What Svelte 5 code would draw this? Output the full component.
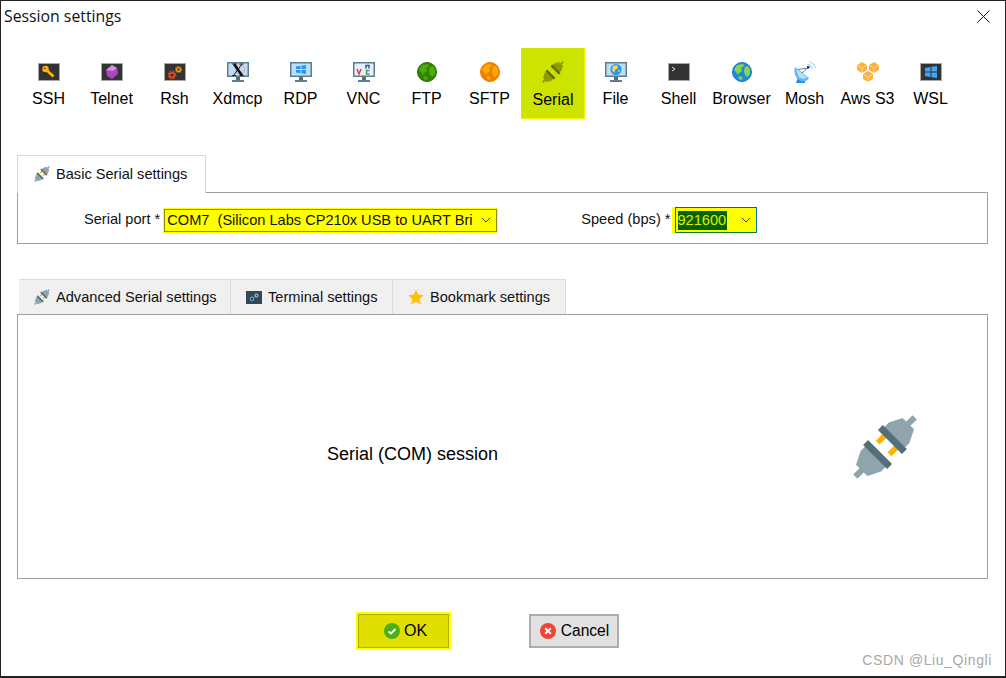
<script lang="ts">
	const sessions = [
		'SSH', 'Telnet', 'Rsh', 'Xdmcp', 'RDP', 'VNC', 'FTP', 'SFTP',
		'Serial', 'File', 'Shell', 'Browser', 'Mosh', 'Aws S3', 'WSL'
	];
	const lowerTabs = ['Advanced Serial settings', 'Terminal settings', 'Bookmark settings'];
	const land = 'M5 3 L11 2 L12 4 L9 6 L10 9 L7 11 L6 13 L4 10 L2 8 Z M13 5 L16 4 L18 8 L18 12 L15 15 L13 13 L12 9 Z M6 15 L9 14 L11 17 L8 18 Z';
</script>

{#snippet plug(size, cls)}
	<svg class="plug {cls}" width={size} height={size} viewBox="0 0 64 64">
		<g transform="rotate(-45 32 32)">
			<rect class="body" x="64" y="29" width="10" height="6" />
			<polygon class="body" points="45,17.5 52,17.5 65,24 65,40 52,46.5 45,46.5" />
			<rect class="prong" x="30" y="21" width="11" height="5.5" />
			<rect class="prong" x="30" y="37.5" width="11" height="5.5" />
			<rect class="bar" x="39" y="15" width="7" height="34" />
			<rect class="body" x="-10" y="29" width="10" height="6" />
			<polygon class="body" points="19,17.5 12,17.5 -1,24 -1,40 12,46.5 19,46.5" />
			<rect class="bar" x="18" y="15" width="7" height="34" />
		</g>
	</svg>
{/snippet}

{#snippet monitor(inner)}
	<svg width="22" height="20" viewBox="0 0 22 20">
		<rect x="0" y="0" width="22" height="15" fill="#607d8b" />
		<rect x="1.5" y="1.5" width="19" height="12" fill="#bbdefb" />
		<rect x="9" y="15" width="4" height="3" fill="#546e7a" />
		<rect x="5" y="18" width="12" height="2" fill="#607d8b" />
		{@render inner()}
	</svg>
{/snippet}

{#snippet globe(rim, sea, ground)}
	<svg width="20" height="20" viewBox="0 0 20 20">
		<circle cx="10" cy="10" r="9.5" fill={sea} stroke={rim} />
		<path d={land} fill={ground} />
	</svg>
{/snippet}

{#snippet gears(a, b)}
	<circle cx="8" cy="12" r="2.4" fill="none" stroke={a} stroke-width="1.6" />
	<circle cx="8" cy="12" r="3.8" fill="none" stroke={a} stroke-width="1.2" stroke-dasharray="1.6 1.4" />
	<circle cx="14.5" cy="6.5" r="1.9" fill="none" stroke={b} stroke-width="1.4" />
	<circle cx="14.5" cy="6.5" r="3.1" fill="none" stroke={b} stroke-width="1" stroke-dasharray="1.4 1.2" />
{/snippet}

{#snippet termBox(inner)}
	<svg width="22" height="18" viewBox="0 0 22 18">
		<rect x="0.5" y="0.5" width="21" height="17" fill="#333" stroke="#aaa" />
		{@render inner()}
	</svg>
{/snippet}

{#snippet sessionIcon(name)}
	{#if name === 'SSH'}
		{#snippet key()}
			<circle cx="7.5" cy="6" r="3.2" fill="#ffb300" />
			<path d="M8 6.5 L15.5 13.5" stroke="#ffb300" stroke-width="2.8" />
			<circle cx="6.8" cy="5.2" r="0.8" fill="#333" />
		{/snippet}
		{@render termBox(key)}
	{:else if name === 'Telnet'}
		{#snippet gem()}
			<polygon points="11,2 16,5 17,11 11,16 6,13 5,7" fill="#ab47bc" />
			<polygon points="11,2 16,5 12,8 5,7" fill="#ce93d8" />
		{/snippet}
		{@render termBox(gem)}
	{:else if name === 'Rsh'}
		{#snippet cogs()}
			{@render gears('#e64a19', '#ff9800')}
		{/snippet}
		{@render termBox(cogs)}
	{:else if name === 'Xdmcp'}
		{#snippet x()}
			<circle cx="13" cy="7.5" r="4.5" fill="none" stroke="#f4a582" stroke-width="1.2" />
			<path d="M7 2 L15 13.5" stroke="#111" stroke-width="2.6" />
			<path d="M15 2 L6.5 13.5" stroke="#111" stroke-width="1" />
			<path d="M5 2 H10 M12.5 2 H16.5 M5 13.5 H9 M12.5 13.5 H17" stroke="#111" stroke-width="0.8" />
		{/snippet}
		{@render monitor(x)}
	{:else if name === 'RDP'}
		{#snippet win()}
			<path d="M6 4.5 L10.5 3.8 V7 H6 Z M11.5 3.7 L16 3 V7 H11.5 Z M6 8 H10.5 V11.2 L6 10.5 Z M11.5 8 H16 V12 L11.5 11.3 Z" fill="#2196f3" />
		{/snippet}
		{@render monitor(win)}
	{:else if name === 'VNC'}
		<svg width="22" height="20" viewBox="0 0 22 20" aria-hidden="true">
			<rect x="0" y="0" width="22" height="15" fill="#607d8b" />
			<rect x="1.5" y="1.5" width="19" height="12" fill="#e3f2fd" />
			<rect x="9" y="15" width="4" height="3" fill="#546e7a" />
			<rect x="5" y="18" width="12" height="2" fill="#607d8b" />
			<path d="M4 7 L6 12 L8 7" fill="none" stroke="#e53935" stroke-width="1.5" />
			<path d="M13 6.5 V3.5 H16 V6.5" fill="none" stroke="#3949ab" stroke-width="1.4" />
			<path d="M16.5 8.5 H13.5 V12 H16.5" fill="none" stroke="#43a047" stroke-width="1.4" />
		</svg>
	{:else if name === 'FTP'}
		{@render globe('#2c6e00', '#2f8500', '#4cae0c')}
	{:else if name === 'SFTP'}
		{@render globe('#f08000', '#f57c00', '#ffab00')}
	{:else if name === 'Serial'}
		{@render plug(22, 'olive')}
	{:else if name === 'File'}
		{#snippet earth()}
			<circle cx="11" cy="7.5" r="5.5" fill="#2196f3" />
			<path d="M8 4 L12 3 L13 6 L10 8 L9 11 L7 8 Z M13 8 L15 8 L14 11 Z" fill="#ffd54f" />
		{/snippet}
		{@render monitor(earth)}
	{:else if name === 'Shell'}
		{#snippet prompt()}
			<path d="M4 4 L7 6 L4 8" fill="none" stroke="#ddd" stroke-width="1" />
		{/snippet}
		{@render termBox(prompt)}
	{:else if name === 'Browser'}
		{@render globe('#1976d2', '#1e88e5', '#8bd640')}
	{:else if name === 'Mosh'}
		<svg width="22" height="22" viewBox="0 0 22 22">
			<path d="M4 16 H11 L11 22 H2 Z" fill="#1e88e5" />
			<path d="M1 6 L15 17 C13 21 6 22 3 17 C0 13 0 9 1 6 Z" fill="#64b5f6" />
			<path d="M2.5 8 L13 16.5 C10 18.5 6 18 4.5 15 C3.5 13 2.5 10 2.5 8 Z" fill="#bbdefb" />
			<path d="M4 8.5 L14 7 M8 12 L14 6.5" stroke="#5f7f9f" stroke-width="1" />
			<rect x="13" y="5" width="2.5" height="2.5" fill="#1a3f80" />
			<path d="M13.5 3 A6 6 0 0 1 18.5 8 M15.5 0.5 A9 9 0 0 1 21.5 7" fill="none" stroke="#90caf9" stroke-width="1" />
		</svg>
	{:else if name === 'Aws S3'}
		<svg width="22" height="20" viewBox="0 0 22 20">
			<path d="M0 3 L5 0 L10 3 V8 L5 11 L0 8 Z M12 3 L17 0 L22 3 V8 L17 11 L12 8 Z M6 12 L11 9 L16 12 V17 L11 20 L6 17 Z" fill="#ffb03a" />
			<path d="M0 3 L5 6 L10 3 M5 6 V11 M12 3 L17 6 L22 3 M17 6 V11 M6 12 L11 15 L16 12 M11 15 V20" fill="none" stroke="#ffe0b2" stroke-width="0.8" />
		</svg>
	{:else}
		{#snippet tiles()}
			<path d="M5 5 L10.5 4 V8.5 H5 Z M11.5 3.8 L17 3 V8.5 H11.5 Z M5 9.5 H10.5 V14 L5 13 Z M11.5 9.5 H17 V15 L11.5 14.2 Z" fill="#42a5f5" />
		{/snippet}
		{@render termBox(tiles)}
	{/if}
{/snippet}

{#snippet tabIcon(label)}
	{#if label.startsWith('Advanced')}
		{@render plug(16, '')}
	{:else if label.startsWith('Terminal')}
		<svg width="16" height="13" viewBox="0 0 16 13">
			<rect width="16" height="13" fill="#37474f" />
			<circle cx="6" cy="8" r="1.8" fill="none" stroke="#42a5f5" stroke-width="1.2" />
			<circle cx="10.5" cy="4.5" r="1.5" fill="none" stroke="#90caf9" stroke-width="1.1" />
		</svg>
	{:else}
		<svg width="16" height="16" viewBox="0 0 16 16">
			<polygon points="8,0.5 10.3,5.6 15.8,6.2 11.7,9.9 12.9,15.4 8,12.6 3.1,15.4 4.3,9.9 0.2,6.2 5.7,5.6" fill="#ffc107" />
		</svg>
	{/if}
{/snippet}

{#snippet chevron()}
	<svg class="chevron" width="10" height="6" viewBox="0 0 10 6">
		<path d="M1 1 L5 5 L9 1" fill="none" stroke="#333" stroke-width="1" />
	</svg>
{/snippet}

<div class="window">
	<header class="titlebar">
		<span class="title">Session settings</span>
		<svg class="close" width="13" height="13" viewBox="0 0 13 13">
			<path d="M0.5 0.5 L12.5 12.5 M12.5 0.5 L0.5 12.5" stroke="#111" stroke-width="1" />
		</svg>
	</header>

	<nav class="toolbar">
		{#each sessions as name}
			<div class="session" class:active={name === 'Serial'}>
				<span class="session-icon">{@render sessionIcon(name)}</span>
				<span class="session-label">{name}</span>
			</div>
		{/each}
	</nav>

	<div class="tab basic">
		{@render plug(16, '')}
		<span>Basic Serial settings</span>
	</div>
	<section class="panel basic-panel">
		<span class="port-label">Serial port *</span>
		<div class="combo port">
			<span class="port-value">COM7&nbsp; (Silicon Labs CP210x USB to UART Bri</span>
			{@render chevron()}
		</div>
		<span class="speed-label">Speed (bps) *</span>
		<div class="combo speed">
			<span class="speed-value">921600</span>
			{@render chevron()}
		</div>
	</section>

	<div class="lower-tabs">
		{#each lowerTabs as label}
			<div class="tab lower">
				{@render tabIcon(label)}
				<span>{label}</span>
			</div>
		{/each}
	</div>
	<section class="panel main-panel">
		<span class="session-name">Serial (COM) session</span>
		<span class="big-plug">{@render plug(64, '')}</span>
	</section>

	<footer class="actions">
		<button class="ok">
			<svg width="16" height="16" viewBox="0 0 16 16">
				<circle cx="8" cy="8" r="8" fill="#4caf1a" />
				<path d="M4.5 8.5 L7 10.5 L11.5 6" fill="none" stroke="#fff" stroke-width="1.8" />
			</svg>
			OK
		</button>
		<button class="cancel">
			<svg width="16" height="16" viewBox="0 0 16 16">
				<circle cx="8" cy="8" r="8" fill="#f44336" />
				<path d="M5.2 5.2 L10.8 10.8 M10.8 5.2 L5.2 10.8" stroke="#fff" stroke-width="2" />
			</svg>
			Cancel
		</button>
	</footer>

	<span class="watermark">CSDN @Liu_Qingli</span>
</div>

<style>
	:global(body) {
		background: #fff;
	}

	.window {
		position: relative;
		box-sizing: border-box;
		width: 1006px;
		height: 678px;
		padding: 0 17px 0 16px;
		border: solid #222;
		border-width: 1px 1px 2px 1px;
		background: #fff;
		font-family: 'Liberation Sans', Arial, sans-serif;
		color: #000;
		overflow: hidden;
	}

	.titlebar {
		display: flex;
		justify-content: space-between;
		height: 47px;
		margin: 0 -2px 0 -13px;
		padding-top: 6px;
		box-sizing: border-box;
	}

	.title {
		font-family: 'Open Sans', 'Noto Sans', sans-serif;
		font-size: 15.8px;
		line-height: 18px;
		color: #111;
	}

	.close {
		margin-top: 3px;
	}

	.toolbar {
		display: flex;
		height: 71px;
	}

	.session {
		flex: 0 0 63px;
		display: flex;
		flex-direction: column;
		align-items: center;
		box-sizing: border-box;
		padding-top: 14px;
		font-size: 16px;
	}

	.session.active {
		flex: 0 0 64px;
		margin-right: -1px;
		background: #cde400;
		border-left: 1px solid #a5d6e8;
		border-right: 1px solid #f4f400;
		border-bottom: 1px solid #f4f400;
	}

	.session.active .session-label {
		margin-top: 8px;
	}

	.session-icon {
		display: flex;
		align-items: center;
		justify-content: center;
		height: 20px;
	}

	.session-label {
		margin-top: 7px;
		line-height: 20px;
		white-space: nowrap;
	}

	.plug .body {
		fill: #90a4ae;
	}

	.plug .bar {
		fill: #546e7a;
	}

	.plug .prong {
		fill: #ffb300;
	}

	.plug.olive .body {
		fill: #8f9a08;
	}

	.plug.olive .bar {
		fill: #5d6b05;
	}

	.plug.olive .prong {
		fill: #dfc800;
	}

	.tab {
		display: flex;
		align-items: center;
		gap: 6px;
		box-sizing: border-box;
		font-size: 14.6px;
		color: #111;
	}

	.tab.basic {
		position: relative;
		z-index: 1;
		width: 189px;
		height: 38px;
		margin-top: 36px;
		padding: 0 0 2px 16px;
		background: #fff;
		border: 1px solid #d9d9d9;
		border-bottom: none;
	}

	.panel {
		box-sizing: border-box;
		width: 971px;
		border: 1px solid #a0a0a0;
		background: #fff;
	}

	.basic-panel {
		display: flex;
		align-items: center;
		height: 52px;
		margin-top: -1px;
		padding-top: 4px;
		font-size: 14.6px;
		color: #111;
	}

	.port-label {
		margin: 0 0 2px 66px;
	}

	.combo {
		display: flex;
		align-items: center;
		box-sizing: border-box;
		background: #ff0;
	}

	.port {
		width: 335px;
		height: 25px;
		margin-left: 3px;
		padding-left: 3px;
		border: 1px solid #ff0;
		outline: 1px solid #8f8f00;
		outline-offset: -2px;
	}

	.port-value {
		width: 306px;
		overflow: hidden;
		white-space: nowrap;
	}

	.chevron {
		margin-left: 8px;
	}

	.speed-label {
		margin: 0 0 2px 83px;
	}

	.speed {
		width: 82px;
		height: 26px;
		margin-left: 4px;
		padding-left: 2px;
		border: 1px solid #0a7d0a;
		border-right-color: #0a78c8;
		box-shadow: -3px 0 0 #ff0;
	}

	.speed-value {
		width: 49px;
		background: #006400;
		color: #e6e800;
		line-height: 19px;
	}

	.speed .chevron {
		margin-left: 14px;
	}

	.lower-tabs {
		display: flex;
		height: 35px;
		margin: 35px 0 0 2px;
	}

	.tab.lower {
		height: 35px;
		padding-left: 14px;
		background: #f0f0f0;
		border: 1px solid #dcdcdc;
		border-width: 1px 1px 0 0;
	}

	.tab.lower:nth-child(1) {
		width: 212px;
		border-left: 1px solid #f0f0f0;
	}

	.tab.lower:nth-child(2) {
		width: 162px;
		padding-left: 15px;
	}

	.tab.lower:nth-child(3) {
		width: 173px;
		padding-left: 15px;
	}

	.main-panel {
		display: flex;
		align-items: center;
		height: 265px;
		padding-top: 14px;
	}

	.session-name {
		margin-left: 309px;
		font-size: 18px;
		line-height: 20px;
	}

	.big-plug {
		display: flex;
		margin: 0 0 14px 355px;
	}

	.actions {
		display: flex;
		align-items: center;
		height: 38px;
		margin-top: 33px;
		padding-left: 339px;
	}

	button {
		display: flex;
		align-items: center;
		justify-content: center;
		gap: 4px;
		box-sizing: border-box;
		font-family: inherit;
		font-size: 16px;
		color: #000;
		padding: 0;
	}

	.ok {
		width: 95px;
		height: 38px;
		padding-left: 4px;
		background: #e0e000;
		border: 2px solid #ff0;
		outline: 1px solid #b0b000;
		outline-offset: -3px;
	}

	.cancel {
		width: 90px;
		height: 34px;
		margin-left: 78px;
		padding-left: 1px;
		gap: 5px;
		font-size: 15.6px;
		background: #e1e1e1;
		border: 2px solid #adadad;
	}

	.watermark {
		position: absolute;
		right: 13px;
		bottom: 8px;
		font-size: 14px;
		letter-spacing: 0.6px;
		color: #a8a8a8;
	}
</style>
